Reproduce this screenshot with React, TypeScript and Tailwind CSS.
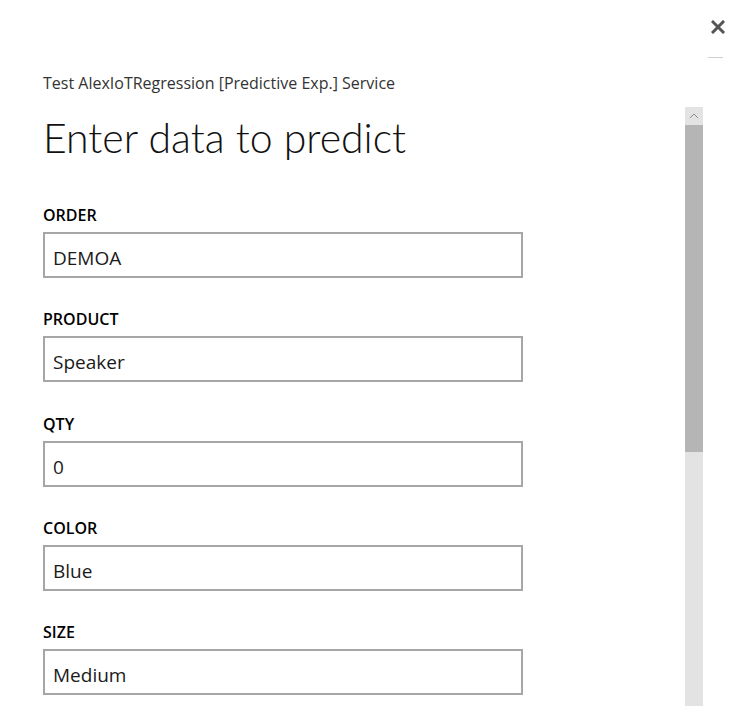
const fields = [
  { label: 'ORDER', value: 'DEMOA' },
  { label: 'PRODUCT', value: 'Speaker' },
  { label: 'QTY', value: '0' },
  { label: 'COLOR', value: 'Blue' },
  { label: 'SIZE', value: 'Medium' },
];

const font = { fontFamily: '"Segoe UI", "Open Sans", "Noto Sans", sans-serif' };
const lightFont = { fontFamily: '"Segoe UI Light", Lato, "Open Sans", sans-serif' };

function Field({ label, value, extra }: { label: string; value: string; extra?: boolean }) {
  return (
    <div className={extra ? 'flex flex-col mb-[1px]' : 'flex flex-col'}>
      <label className="text-[16px] leading-[16px] font-semibold text-black">{label}</label>
      <input
        readOnly
        value={value}
        className="mt-[9px] h-[46px] w-[480px] border-2 border-[#a6a6a6] bg-white px-[8px] pt-[5px] pb-0 text-[19px] text-[#1a1a1a] outline-none"
        style={font}
      />
    </div>
  );
}

function Scrollbar() {
  return (
    <div className="flex w-[18px] shrink-0 flex-col bg-[#e3e3e3]">
      <div className="flex h-[18px] items-center justify-center">
        <svg width="10" height="6" viewBox="0 0 10 6" fill="none">
          <polyline points="1,5 5,1 9,5" stroke="#8a8a8a" strokeWidth="1" />
        </svg>
      </div>
      <div className="h-[327px] bg-[#b5b5b5]" />
      <div className="flex-1" />
    </div>
  );
}

export default function App() {
  return (
    <div className="flex h-[706px] w-[745px] flex-col overflow-hidden bg-white" style={font}>
      <div className="flex flex-col items-end pr-[20px] pt-[20px]">
        <button className="flex h-[14px] w-[14px] items-center justify-center" aria-label="Close">
          <svg width="14" height="14" viewBox="0 0 14 14">
            <path d="M2 2 L12 12 M12 2 L2 12" stroke="#555" strokeWidth="3" strokeLinecap="square" />
          </svg>
        </button>
        <div className="mt-[23px] mr-[2px] h-px w-[15px] bg-[#cfcfcf]" />
      </div>

      <div className="pl-[43px] pt-[14px] text-[16px] leading-[22px] font-normal text-[#333]">
        Test AlexIoTRegression [Predictive Exp.] Service
      </div>

      <div className="mt-[13px] flex min-h-0 flex-1">
        <div className="flex flex-1 flex-col pl-[43px]">
          <h1 className="mt-[3px] text-[41px] leading-[56px] font-light text-[#111]" style={lightFont}>
            Enter data to predict
          </h1>
          <div className="mt-[41px] flex flex-col gap-[33px]">
            {fields.map((f, i) => (
              <Field key={f.label} label={f.label} value={f.value} extra={i === 1} />
            ))}
          </div>
        </div>
        <Scrollbar />
        <div className="w-[42px] shrink-0" />
      </div>
    </div>
  );
}
